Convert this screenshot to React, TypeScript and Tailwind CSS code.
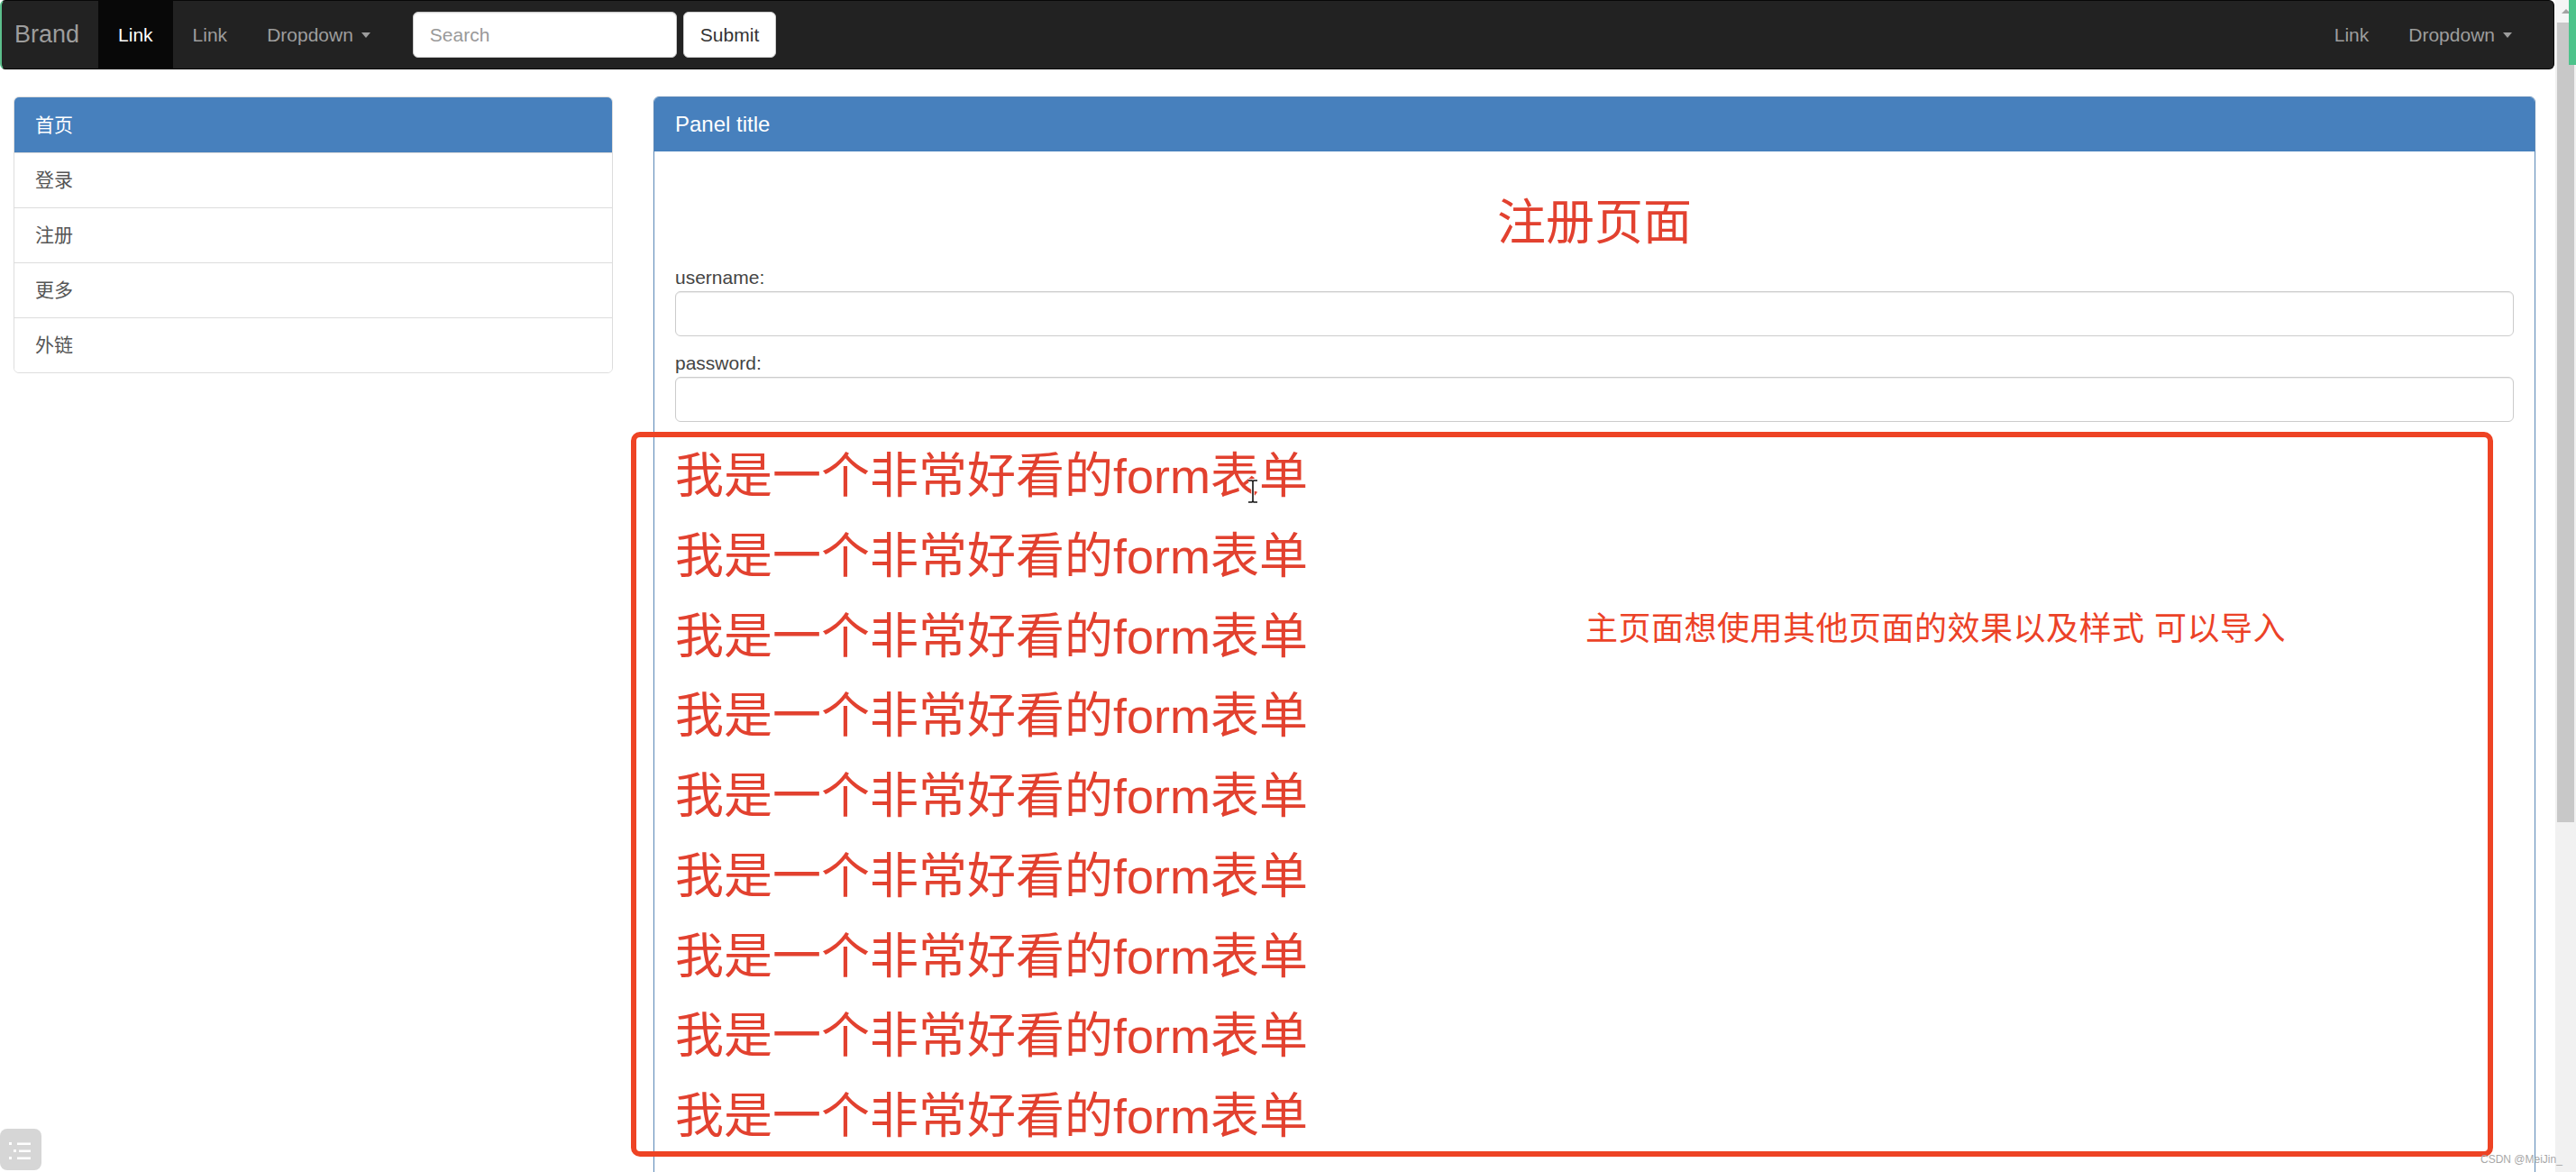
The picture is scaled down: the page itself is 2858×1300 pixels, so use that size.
import React from 'react'

const menu = ['首页', '登录', '注册', '更多', '外链']
const lines = Array.from({ length: 9 }, () => '我是一个非常好看的form表单')

function Caret() {
  return (
    <span className="ml-[9px] inline-block h-0 w-0 border-x-[5px] border-t-[6px] border-x-transparent border-t-current" />
  )
}

function NavBar() {
  return (
    <nav className="flex h-[77px] items-stretch rounded-[6px] border border-[#080808] border-l-[2px] border-l-[#5cbf8c] bg-[#222222] text-[21px] text-[#9d9d9d]">
      <a className="flex items-center pl-[14px] pr-[21px] text-[27px]">Brand</a>
      <a className="flex items-center bg-[#080808] px-[22px] text-white">Link</a>
      <a className="flex items-center px-[22px]">Link</a>
      <a className="flex items-center px-[22px]">
        Dropdown
        <Caret />
      </a>
      <form className="ml-[25px] flex items-center gap-[7px]">
        <input
          placeholder="Search"
          className="h-[51px] w-[293px] rounded-[6px] border border-[#cccccc] bg-white px-[18px] text-[21px] text-[#555] shadow-[inset_0_1px_1px_rgba(0,0,0,0.075)] outline-none placeholder:text-[#999]"
        />
        <button
          type="button"
          className="h-[51px] rounded-[6px] border border-[#cccccc] bg-white px-[18px] text-[21px] text-[#333]"
        >
          Submit
        </button>
      </form>
      <div className="ml-auto mr-[24px] flex items-stretch">
        <a className="flex items-center px-[22px]">Link</a>
        <a className="flex items-center px-[22px]">
          Dropdown
          <Caret />
        </a>
      </div>
    </nav>
  )
}

function SideMenu() {
  return (
    <div className="w-[665px] self-start overflow-hidden rounded-[6px] border border-[#dddddd]">
      {menu.map((item, i) => (
        <div
          key={item}
          className={
            i === 0
              ? 'flex h-[61px] items-center bg-[#4780bd] px-[23px] text-[21px] text-white'
              : 'flex h-[61px] items-center border-t border-[#dddddd] bg-white px-[23px] text-[21px] text-[#555]'
          }
        >
          {item}
        </div>
      ))}
    </div>
  )
}

function Panel() {
  return (
    <div className="flex-1 rounded-t-[6px] border border-[#5a87b6] bg-white">
      <div className="flex h-[60px] items-center rounded-t-[5px] bg-[#4780bd] px-[23px] text-[24px] text-white">
        Panel title
      </div>
      <div className="px-[23px] pb-[40px] pt-[50px]">
        <h1 className="text-center text-[54px] font-normal leading-[59px] text-[#e2412f]">注册页面</h1>
        <label className="mt-[16px] block text-[21px] leading-[30px] text-[#444]">username:</label>
        <input className="block h-[50px] w-full rounded-[6px] border border-[#cccccc] shadow-[inset_0_1px_1px_rgba(0,0,0,0.075)] outline-none" />
        <label className="mt-[15px] block text-[21px] leading-[30px] text-[#444]">password:</label>
        <input
          type="password"
          className="block h-[50px] w-full rounded-[6px] border border-[#cccccc] shadow-[inset_0_1px_1px_rgba(0,0,0,0.075)] outline-none"
        />
        <div className="mt-[31px] flex flex-col gap-[29.75px]">
          {lines.map((t, i) => (
            <h1 key={i} className="text-[54px] font-normal leading-[59px] text-[#e2412f]">
              {t}
            </h1>
          ))}
        </div>
      </div>
    </div>
  )
}

function ScrollBar() {
  return (
    <div className="relative flex w-[23px] shrink-0 flex-col bg-[#f1f1f1]">
      <div className="flex h-[25px] items-center justify-center bg-[#f5f5f5]">
        <span className="inline-block h-0 w-0 border-x-[5px] border-b-[5px] border-x-transparent border-b-[#a3a3a3]" />
      </div>
      <div className="mx-[2px] h-[887px] bg-[#c8c8c8]" />
      <div className="absolute right-0 top-0 h-[72px] w-[8px] bg-[#4dc38b]" />
    </div>
  )
}

export default function App() {
  return (
    <div className="relative flex h-[1300px] w-full overflow-hidden bg-white font-['Liberation_Sans','Noto_Sans_CJK_SC',sans-serif]">
      <div className="relative min-w-0 flex-1">
        <div className="pr-[1px]">
          <NavBar />
        </div>
        <div className="flex gap-[45px] pl-[15px] pr-[22px] pt-[30px]">
          <SideMenu />
          <Panel />
        </div>

        {/* annotation drawn over the screenshot */}
        <div className="pointer-events-none absolute left-[700px] top-[479px] h-[804px] w-[2066px] rounded-[10px] border-[6px] border-[#ee4324]" />
        <div className="absolute left-[1759px] top-[680px] whitespace-pre text-[36px] leading-[36px] tracking-[0.5px] text-[#ec4227]">
          主页面想使用其他页面的效果以及样式 可以导入
        </div>

        {/* text cursor */}
        <svg className="absolute left-[1383px] top-[531px]" width="14" height="28" viewBox="0 0 14 28">
          <path d="M2 2h4l1 1 1-1h4M7 3v22M2 26h4l1-1 1 1h4" fill="none" stroke="#fff" strokeWidth="3.5" />
          <path d="M2 2h4l1 1 1-1h4M7 3v22M2 26h4l1-1 1 1h4" fill="none" stroke="#111" strokeWidth="1.6" />
        </svg>

        {/* floating list button */}
        <div className="absolute left-0 top-[1252px] flex h-[46px] w-[46px] items-center justify-center rounded-[8px] bg-[#d6d6d6]">
          <svg width="30" height="24" viewBox="0 0 30 24">
            <g fill="#ffffff">
              <rect x="2" y="4" width="3" height="3" />
              <rect x="11" y="4.5" width="15" height="2.5" />
              <rect x="7" y="12" width="3" height="3" />
              <rect x="13" y="12.5" width="13" height="2.5" />
              <rect x="2" y="20" width="3" height="3" />
              <rect x="11" y="20.5" width="15" height="2.5" />
            </g>
          </svg>
        </div>
      </div>
      <ScrollBar />
      <div className="absolute left-[2752px] top-[1277px] text-[12px] text-[#a8a8a8]">CSDN @MeiJin_</div>
    </div>
  )
}
